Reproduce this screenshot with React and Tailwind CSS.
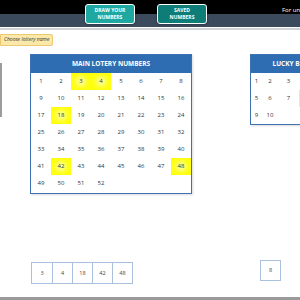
import React from 'react';

const mainNumbers = Array.from({ length: 52 }, (_, i) => i + 1);
const luckyNumbers = Array.from({ length: 10 }, (_, i) => i + 1);
const picked = [3, 4, 18, 42, 48];
const luckyPicked = [8];

const hl = 'bg-[radial-gradient(circle,#ffffb0_0%,#ffff1a_55%,#ffff00_100%)]';

const App = () => {
  return (
    <div className="w-[300px] h-[300px] overflow-hidden bg-white flex flex-col font-['Open_Sans',sans-serif] text-[#333]">
      {/* top bar */}
      <div className="h-[30px] shrink-0 flex items-start pl-[85px] pt-[4px] overflow-hidden bg-[linear-gradient(to_bottom,#000_0px,#000_14px,#3c4a5d_14px,#3c4a5d_27px,#fff_27px,#fff_28px,#cfd3d8_28px,#cfd3d8_30px)]">
        <button className="shrink-0 w-[50px] h-[20px] rounded-[3px] border border-white bg-[#1fa8a1] shadow-[0_0_2px_rgba(0,0,0,0.6)] text-white text-[5px] font-bold leading-[7px] flex items-center justify-center text-center">
          DRAW YOUR<br />NUMBERS
        </button>
        <button className="shrink-0 ml-[22px] w-[50px] h-[20px] rounded-[3px] border border-white bg-[#0e7c77] shadow-[0_0_2px_rgba(0,0,0,0.6)] text-white text-[5px] font-bold leading-[7px] flex items-center justify-center text-center">
          SAVED<br />NUMBERS
        </button>
        <span className="shrink-0 ml-[75px] mt-[2px] text-[6px] text-white whitespace-nowrap">For unique combinations</span>
      </div>

      {/* lottery chooser */}
      <div className="mt-[4px] w-[53px] h-[12px] shrink-0 rounded-r-[2px] bg-[#fce8a8] border border-[#ecc96e] flex items-center pl-[3px] text-[5px] italic text-[#333] whitespace-nowrap">
        Choose lottery name
      </div>

      {/* panels */}
      <div className="mt-[8px] flex items-start shrink-0">
        <div className="shrink-0 w-[2px] h-[54px] mt-[9px] bg-[#9c9c9c]" />

        <div className="shrink-0 ml-[28px] w-[162px] border border-[#3d73b2] shadow-[1px_1px_2px_rgba(0,0,0,0.15)]">
          <div className="h-[18px] bg-[#2f6db3] text-white text-[6.5px] font-bold flex items-center justify-center">
            MAIN LOTERY NUMBERS
          </div>
          <div className="grid grid-cols-8 bg-white pb-[1px]">
            {mainNumbers.map((n) => (
              <div
                key={n}
                className={'h-[17px] flex items-center justify-center text-[6px] ' + (picked.includes(n) ? hl : '')}
              >
                {n}
              </div>
            ))}
          </div>
        </div>

        <div className="shrink-0 ml-[58px] w-[84px] border border-[#3d73b2] shadow-[1px_1px_2px_rgba(0,0,0,0.15)]">
          <div className="h-[18px] bg-[#2f6db3] text-white text-[6.5px] font-bold flex items-center justify-center whitespace-nowrap">
            LUCKY BALL
          </div>
          <div className="grid grid-cols-[11px_16px_21px_20px_14px] bg-white">
            {[1, 2, 3, 4, null, 5, 6, 7, 8, null, 9, 10].map((n, i) => (
              <div
                key={i}
                className={'h-[17px] flex items-center justify-center text-[6px] ' + (n && luckyPicked.includes(n) ? hl : '')}
              >
                {n}
              </div>
            ))}
          </div>
        </div>
      </div>

      {/* picked numbers */}
      <div className="mt-[66px] flex items-start shrink-0">
        <div className="ml-[31px] mt-[2px] flex border border-[#a9c1de]">
          {picked.map((n, i) => (
            <div
              key={n}
              className={'w-[20px] h-[20px] flex items-center justify-center text-[5.5px] text-[#444] ' + (i > 0 ? 'border-l border-[#a9c1de]' : '')}
            >
              {n}
            </div>
          ))}
        </div>
        <div className="ml-[127px] w-[21px] h-[21px] border border-[#a9c1de] flex items-center justify-center text-[5.5px] text-[#444]">
          {luckyNumbers[7]}
        </div>
      </div>

      <div className="mt-auto h-[3px] shrink-0 bg-[#9a9a9a]" />
    </div>
  );
};

export default App;
